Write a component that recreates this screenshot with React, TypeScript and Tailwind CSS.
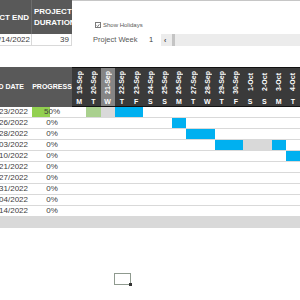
const days = [
  { d: "19-Sep", w: "M" },
  { d: "20-Sep", w: "T" },
  { d: "21-Sep", w: "W" },
  { d: "22-Sep", w: "T" },
  { d: "23-Sep", w: "F" },
  { d: "24-Sep", w: "S" },
  { d: "25-Sep", w: "S" },
  { d: "26-Sep", w: "M" },
  { d: "27-Sep", w: "T" },
  { d: "28-Sep", w: "W" },
  { d: "29-Sep", w: "T" },
  { d: "30-Sep", w: "F" },
  { d: "1-Oct", w: "S" },
  { d: "2-Oct", w: "S" },
  { d: "3-Oct", w: "M" },
  { d: "4-Oct", w: "T" },
];

type Fill = "blue" | "green" | "gray";

const tasks: { end: string; progress: number; cells: Record<number, Fill> }[] = [
  { end: "09/23/2022", progress: 50, cells: { 1: "green", 2: "gray", 3: "blue", 4: "blue" } },
  { end: "09/26/2022", progress: 0, cells: { 7: "blue" } },
  { end: "09/28/2022", progress: 0, cells: { 8: "blue", 9: "blue" } },
  { end: "10/03/2022", progress: 0, cells: { 10: "blue", 11: "blue", 12: "gray", 13: "gray", 14: "blue" } },
  { end: "10/10/2022", progress: 0, cells: { 15: "blue" } },
  { end: "10/21/2022", progress: 0, cells: {} },
  { end: "10/27/2022", progress: 0, cells: {} },
  { end: "10/31/2022", progress: 0, cells: {} },
  { end: "11/04/2022", progress: 0, cells: {} },
  { end: "11/14/2022", progress: 0, cells: {} },
];

const fillClass: Record<Fill, string> = {
  blue: "bg-[#00b0f0]",
  green: "bg-[#a9d08e]",
  gray: "bg-[#d9d9d9]",
};

const narrow = "font-['Liberation_Sans_Narrow','Liberation_Sans',Arial,sans-serif]";

export default function App() {
  return (
    <div className="w-[300px] h-[300px] overflow-hidden bg-white font-['Liberation_Sans',Arial,sans-serif] text-[#404040]">
      {/* Project summary + controls */}
      <div className="flex h-[46px]">
        <div className="flex w-[72px] flex-col">
          <div className={`flex h-[34px] bg-[#595959] text-[8px] font-bold leading-[11px] text-white ${narrow}`}>
            <div className="flex w-[32px] items-center justify-end overflow-hidden whitespace-nowrap border-r border-[#6e6e6e] pr-[2px]">
              PROJECT END
            </div>
            <div className="flex w-[40px] items-center pl-[2px]">
              PROJECT
              <br />
              DURATION
            </div>
          </div>
          <div className="flex h-[12px] border-b border-[#d9d9d9] text-[8px] leading-[11px]">
            <div className="flex w-[32px] justify-end overflow-hidden whitespace-nowrap border-r border-[#d9d9d9] pr-[1px]">
              9/14/2022
            </div>
            <div className="w-[40px] border-r border-[#d9d9d9] pr-[2px] text-right">39</div>
          </div>
        </div>

        <div className="flex flex-1 flex-col overflow-hidden border-t border-[#c6c6c6]">
          <div className="ml-[23px] mt-[21px] flex h-[7px] items-center gap-[2px]">
            <div className="flex h-[6px] w-[6px] items-center justify-center border border-[#7a7a7a] bg-white">
              <svg viewBox="0 0 6 6" className="h-[5px] w-[5px]">
                <path d="M1 3 L2.5 4.5 L5 1.2" fill="none" stroke="#333" strokeWidth="1" />
              </svg>
            </div>
            <span className="text-[6px] leading-none text-[#595959]">Show Holidays</span>
          </div>
          <div className="ml-[21px] mt-[6px] flex h-[12px] items-center">
            <span className="w-[56px] shrink-0 text-[7.5px] leading-none text-[#595959]">Project Week</span>
            <span className="w-[12px] shrink-0 text-[7.5px] leading-none text-[#404040]">1</span>
            <div className="flex h-[12px] w-[145px] shrink-0 items-center bg-[#ececec]">
              <span className="ml-[3px] text-[7px] font-bold leading-none text-[#444]">&lsaquo;</span>
              <div className="ml-[6px] h-[12px] w-[3px] bg-[#c4c4c4]" />
            </div>
          </div>
        </div>
      </div>

      {/* Gantt table */}
      <div className="mt-[21px]">
        <div className="grid h-[40px] grid-cols-[32px_40px_repeat(16,minmax(0,1fr))]">
          <div className={`flex items-center justify-end overflow-hidden whitespace-nowrap bg-[#595959] pr-[8px] text-[7px] font-bold text-white ${narrow}`}>
            END DATE
          </div>
          <div className={`flex items-center justify-center bg-[#595959] text-[7px] font-bold text-white ${narrow}`}>
            PROGRESS
          </div>
          {days.map((day, i) => (
            <div
              key={day.d}
              className={`flex flex-col border-y border-[#111] ${i === 2 ? "bg-[#858585]" : "bg-[#3a3a3a]"}`}
            >
              <div className="flex h-[28px] items-center justify-center">
                <span className={`rotate-180 text-[7px] font-bold leading-none text-white [writing-mode:vertical-rl] ${narrow}`}>
                  {day.d}
                </span>
              </div>
              <div className={`flex h-[10px] items-center justify-center text-[7px] font-bold leading-none text-white ${narrow}`}>
                {day.w}
              </div>
            </div>
          ))}
        </div>

        {tasks.map((t) => (
          <div
            key={t.end}
            className="grid h-[11px] grid-cols-[32px_40px_repeat(16,minmax(0,1fr))] border-b border-[#d9d9d9] text-[8px] leading-[10px]"
          >
            <div className="flex justify-end overflow-hidden whitespace-nowrap pr-[4px]">{t.end}</div>
            <div
              className="text-center"
              style={{
                background: `linear-gradient(to right, #92d050 ${(t.progress * 36) / 40}%, transparent ${(t.progress * 36) / 40}%)`,
              }}
            >
              {t.progress}%
            </div>
            {days.map((day, i) => (
              <div key={day.d} className={t.cells[i] ? fillClass[t.cells[i]] : ""} />
            ))}
          </div>
        ))}

        <div className="h-[11px] bg-[#d9d9d9]" />
      </div>

      {/* selected cell */}
      <div className="relative ml-[114px] mt-[45px] h-[12px] w-[17px] border border-[#8f9a8f]">
        <div className="absolute -bottom-[2px] -right-[2px] h-[3px] w-[3px] bg-[#333]" />
      </div>
    </div>
  );
}
